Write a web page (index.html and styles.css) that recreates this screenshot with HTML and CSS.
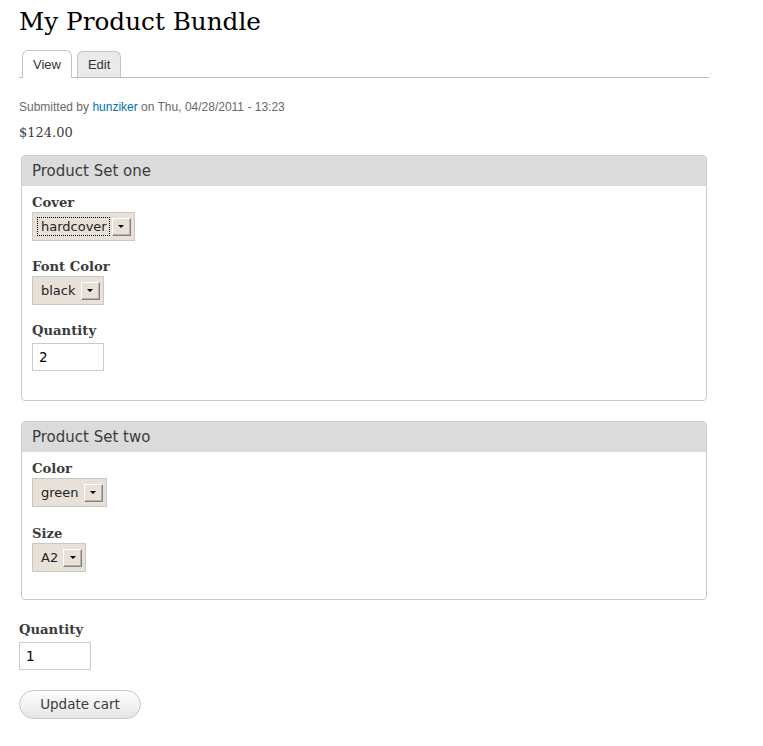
FILE: index.html
```html
<!DOCTYPE html>
<html>
<head>
<meta charset="utf-8">
<link rel="stylesheet" href="styles.css">
</head>
<body>
<div class="page">
  <h1 class="title">My Product Bundle</h1>
  <ul class="tabs">
    <li class="tab active">View</li>
    <li class="tab">Edit</li>
  </ul>
  <div class="meta">Submitted by <a class="user" href="#">hunziker</a> on Thu, 04/28/2011 - 13:23</div>
  <div class="price">$124.00</div>

  <div class="fieldset one">
    <div class="legend">Product Set one</div>
    <div class="fs-body">
      <div class="item">
        <label class="lbl">Cover</label>
        <div class="select"><span class="sel-text focused">hardcover</span><span class="arrow"><span class="tri"></span></span></div>
      </div>
      <div class="item">
        <label class="lbl">Font Color</label>
        <div class="select"><span class="sel-text">black</span><span class="arrow"><span class="tri"></span></span></div>
      </div>
      <div class="item">
        <label class="lbl">Quantity</label>
        <div class="input">2</div>
      </div>
    </div>
  </div>

  <div class="fieldset two">
    <div class="legend">Product Set two</div>
    <div class="fs-body">
      <div class="item">
        <label class="lbl">Color</label>
        <div class="select"><span class="sel-text">green</span><span class="arrow"><span class="tri"></span></span></div>
      </div>
      <div class="item">
        <label class="lbl">Size</label>
        <div class="select"><span class="sel-text">A2</span><span class="arrow"><span class="tri"></span></span></div>
      </div>
    </div>
  </div>

  <div class="item outer">
    <label class="lbl">Quantity</label>
    <div class="input">1</div>
  </div>

  <div class="button">Update cart</div>
</div>
</body>
</html>
```

FILE: styles.css
```css
html, body {
  margin: 0;
  padding: 0;
  background: #fff;
}
body {
  color: #3b3b3b;
  font-family: "Liberation Sans", Arial, sans-serif;
}
.page {
  width: 690px;
  padding: 6px 0 0 19px;
}
.title {
  margin: 0;
  font-family: "DejaVu Serif", Georgia, serif;
  font-weight: normal;
  font-size: 24.7px;
  line-height: 32px;
  color: #000;
}
.tabs {
  list-style: none;
  margin: 12px 0 0 0;
  padding: 0 0 0 3px;
  display: flex;
  gap: 5px;
  border-bottom: 1px solid #bbb;
  height: 27px;
  align-items: flex-end;
}
.tab {
  box-sizing: border-box;
  height: 26px;
  padding: 0 10px;
  border: 1px solid #c4c4c4;
  border-bottom: none;
  border-radius: 6px 6px 0 0;
  background: #eaeaea;
  font-size: 13px;
  line-height: 25px;
  color: #333;
}
.tab.active {
  height: 28px;
  margin-bottom: -1px;
  background: #fff;
  line-height: 27px;
}
.meta {
  margin-top: 22px;
  font-size: 12px;
  line-height: 15px;
  color: #68696b;
}
.user {
  color: #0071b3;
  text-decoration: none;
}
.price {
  margin-top: 10px;
  font-family: "DejaVu Serif", Georgia, serif;
  font-size: 13px;
  line-height: 16px;
  color: #3b3b3b;
}
.fieldset {
  box-sizing: border-box;
  width: 686px;
  margin: 14px 0 0 2px;
  border: 1px solid #ccc;
  border-radius: 4px;
  overflow: hidden;
}
.fieldset.two {
  margin-top: 20px;
}
.legend {
  background: #dbdbdb;
  height: 30px;
  line-height: 30px;
  padding-left: 10px;
  font-family: "DejaVu Sans", Verdana, sans-serif;
  font-size: 15px;
  color: #3b3b3b;
}
.fs-body {
  padding: 8px 10px 29px 10px;
  display: flex;
  flex-direction: column;
  gap: 17px;
}
.two .fs-body {
  gap: 18px;
  padding-bottom: 27px;
}
.item {
  display: flex;
  flex-direction: column;
  align-items: flex-start;
}
.lbl {
  font-family: "DejaVu Serif", Georgia, serif;
  font-weight: bold;
  font-size: 13.2px;
  line-height: 17px;
  margin-bottom: 1px;
  color: #3b3b3b;
}
.select {
  box-sizing: border-box;
  height: 29px;
  display: flex;
  align-items: center;
  background: #e8e1d9;
  border: 1px solid #cbc6c0;
  padding: 0 3px 0 4px;
  gap: 2px;
  font-family: "DejaVu Sans", Verdana, sans-serif;
  font-size: 13px;
  color: #222;
}
.sel-text {
  box-sizing: border-box;
  height: 19px;
  line-height: 17px;
  padding: 0 2px 0 3px;
  border: 1px dotted transparent;
}
.sel-text.focused {
  border-color: #000;
}
.arrow {
  box-sizing: border-box;
  width: 19px;
  height: 18px;
  background: #e8e1d9;
  border: 1px solid;
  border-color: #fff #808080 #808080 #fff;
  box-shadow: inset -1px -1px 0 #b9b2aa;
  display: flex;
  align-items: center;
  justify-content: center;
}
.tri {
  width: 0;
  height: 0;
  border-left: 3px solid transparent;
  border-right: 3px solid transparent;
  border-top: 3px solid #000;
}
.input {
  box-sizing: border-box;
  width: 72px;
  height: 28px;
  margin-top: 3px;
  border: 1px solid #ccc;
  padding-left: 6px;
  line-height: 26px;
  font-family: "DejaVu Sans", Verdana, sans-serif;
  font-size: 13.5px;
  color: #000;
}
.item.outer {
  margin-top: 21px;
}
.button {
  box-sizing: border-box;
  margin-top: 20px;
  width: 122px;
  height: 29px;
  border: 1px solid #c7c7c7;
  border-radius: 15px;
  background: linear-gradient(#fdfdfd, #e6e6e6);
  text-align: center;
  line-height: 27px;
  font-family: "DejaVu Sans", Verdana, sans-serif;
  font-size: 13.5px;
  color: #3a3a3a;
}
```
